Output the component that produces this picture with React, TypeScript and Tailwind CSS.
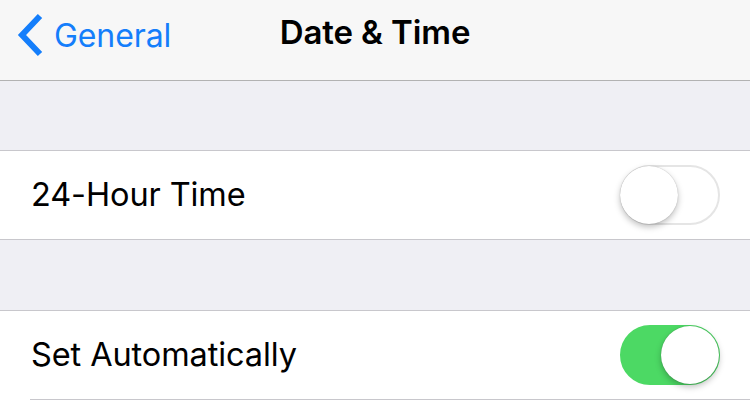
import { useState } from 'react'

function Toggle({ on, onChange }: { on: boolean; onChange: () => void }) {
  return (
    <button
      onClick={onChange}
      className={`relative h-[60px] w-[100px] shrink-0 rounded-full border-2 transition-colors ${
        on ? 'border-[#4cd964] bg-[#4cd964]' : 'border-[#e5e5e5] bg-white'
      }`}
    >
      <span
        className={`absolute top-[-1px] h-[58px] w-[58px] rounded-full bg-white shadow-[0_3px_6px_rgba(0,0,0,0.25),0_0_1px_rgba(0,0,0,0.3)] transition-all ${
          on ? 'left-[39px]' : 'left-[-2px]'
        }`}
      />
    </button>
  )
}

export default function App() {
  const [is24h, setIs24h] = useState(false)
  const [auto, setAuto] = useState(true)

  return (
    <div className="h-[414px] w-[750px] overflow-hidden bg-white font-['Inter','Liberation_Sans',sans-serif] text-black">
      {/* barra de navegación */}
      <div className="relative flex h-[81px] items-center border-b border-[#b2b2b2] bg-[#f7f7f7] pb-[8px]">
        <div className="flex items-center pl-[15px] text-[#147efb]">
          <svg width="30" height="46" viewBox="0 0 30 46" fill="none">
            <path d="M25 3 L7 22 L25 41" stroke="#147efb" strokeWidth="6" strokeLinecap="butt" strokeLinejoin="miter" />
          </svg>
          <span className="ml-[9px] text-[32px] leading-none tracking-[-0.1px]">General</span>
        </div>
        <div className="absolute inset-x-0 pb-[8px] text-center text-[33px] font-semibold leading-none tracking-[-0.1px]">
          Date &amp; Time
        </div>
      </div>

      <div className="h-[70px] border-b border-[#c8c7cc] bg-[#efeff4]" />

      <div className="flex h-[89px] items-center justify-between border-b border-[#c8c7cc] bg-white pl-[31px] pr-[30px]">
        <span className="text-[32.5px] tracking-[-0.1px]">24-Hour Time</span>
        <Toggle on={is24h} onChange={() => setIs24h(v => !v)} />
      </div>

      <div className="h-[71px] border-b border-[#c8c7cc] bg-[#efeff4]" />

      <div className="bg-white pl-[30px]">
        <div className="flex h-[89px] items-center justify-between border-b border-[#c8c7cc] pr-[30px]">
          <span className="pl-[1px] text-[32.5px] tracking-[-0.1px]">Set Automatically</span>
          <Toggle on={auto} onChange={() => setAuto(v => !v)} />
        </div>
      </div>
    </div>
  )
}
